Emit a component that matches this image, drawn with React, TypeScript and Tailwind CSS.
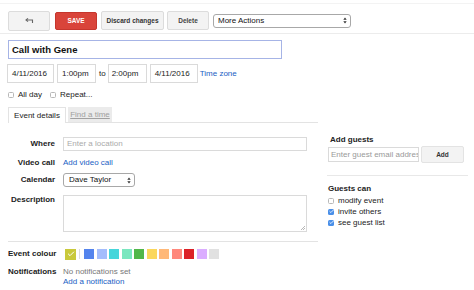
import { Check } from 'lucide-react';

const COLOURS = ['#5484ed', '#a4bdfc', '#46d6db', '#7ae7bf', '#51b749', '#fbd75b', '#ffb878', '#ff887c', '#dc2127', '#dbadff', '#e1e1e1'];

function Box({ checked, label }: { checked?: boolean; label: string }) {
  return (
    <div className="flex items-center gap-[4px] h-[11px] whitespace-nowrap">
      {checked ? (
        <span className="w-[6px] h-[6px] rounded-[1.5px] bg-[#4a8fe8] flex items-center justify-center">
          <Check className="w-[5px] h-[5px] text-white" strokeWidth={4} />
        </span>
      ) : (
        <span className="w-[6px] h-[6px] rounded-[1.5px] border border-[#b8b8b8] bg-white" />
      )}
      <span>{label}</span>
    </div>
  );
}

function Label({ children }: { children: string }) {
  return <div className="w-[47px] shrink-0 text-right font-bold text-[#222] whitespace-nowrap">{children}</div>;
}

function Arrows() {
  return (
    <svg width="4" height="7" viewBox="0 0 4 7" fill="#333">
      <path d="M0.3 2.8 2 0.5 3.7 2.8z" />
      <path d="M0.3 4.2 2 6.5 3.7 4.2z" />
    </svg>
  );
}

export default function App() {
  return (
    <div className="w-[474px] h-[290px] bg-white overflow-hidden text-[8px] leading-[10px] text-[#222] font-['Liberation_Sans',Arial,sans-serif]">
      {/* Toolbar */}
      <div className="h-[4px] border-b border-[#f3f3f3]" />
      <div className="h-[30px] border-b border-[#ececec] flex items-center pl-[8px] pt-[4px]">
        <button className="w-[42px] h-[20px] bg-[#f3f3f3] border border-[#dcdcdc] rounded-[2px] flex items-center justify-center">
          <svg width="9" height="5" viewBox="0 0 9 5" fill="none" stroke="#666" strokeWidth="1.1">
            <path d="M1 2h6.5v3" />
            <path d="M3 0.4 1 2l2 1.6" />
          </svg>
        </button>
        <button className="ml-[5px] w-[42px] h-[18px] bg-[#d9443a] border border-[#c5362d] rounded-[2px] text-white text-[6.5px] font-bold">SAVE</button>
        <button className="ml-[4px] w-[63px] h-[19px] bg-[#f3f3f3] border border-[#dcdcdc] rounded-[2px] text-[#333] text-[6.5px] font-bold whitespace-nowrap">Discard changes</button>
        <button className="ml-[3px] w-[42px] h-[19px] bg-[#f3f3f3] border border-[#dcdcdc] rounded-[2px] text-[#444] text-[6.5px] font-bold">Delete</button>
        <div className="ml-[4px] w-[138px] h-[14px] border border-[#a8a8a8] rounded-[3px] bg-white flex items-center justify-between pl-[4px] pr-[3px] text-[#111]">
          <span>More Actions</span>
          <Arrows />
        </div>
      </div>

      {/* Title */}
      <div className="mt-[6px] ml-[8px] w-[274px] h-[19px] border border-[#a6b4e6] px-[3px] flex items-center text-[9.5px] font-bold text-[#111]">
        Call with Gene
      </div>

      {/* Date row */}
      <div className="mt-[5px] ml-[7px] h-[19px] flex items-center whitespace-nowrap">
        <div className="w-[47px] h-[19px] border border-[#dadada] flex items-center pl-[4px]">4/11/2016</div>
        <div className="ml-[3px] w-[39px] h-[19px] border border-[#dadada] flex items-center pl-[4px]">1:00pm</div>
        <span className="ml-[3px]">to</span>
        <div className="ml-[2px] w-[39px] h-[19px] border border-[#dadada] flex items-center pl-[3px]">2:00pm</div>
        <div className="ml-[3px] w-[48px] h-[19px] border border-[#dadada] flex items-center pl-[4px]">4/11/2016</div>
        <a className="ml-[2px] text-[#2160c4]">Time zone</a>
      </div>

      {/* Checkbox row */}
      <div className="mt-[6px] ml-[8px] flex items-center gap-[8px] h-[11px]">
        <Box label="All day" />
        <Box label="Repeat..." />
      </div>

      <div className="flex">
        {/* Left column */}
        <div className="ml-[8px] w-[310px]">
          <div className="mt-[8px] flex items-end h-[15px] border-b border-[#e3e3e3]">
            <div className="w-[58px] h-[16px] border border-b-0 border-[#e3e3e3] bg-white flex items-center justify-center -mb-px">Event details</div>
            <div className="ml-[2px] w-[44px] h-[15px] bg-[#ebebeb] flex items-center justify-center text-[#a0a0a0] underline">Find a time</div>
          </div>

          <div className="mt-[14px] flex items-center gap-[8px]">
            <Label>Where</Label>
            <div className="w-[244px] h-[14px] border border-[#dadada] flex items-center pl-[3px] text-[#aaa]">Enter a location</div>
          </div>

          <div className="mt-[6px] flex items-center gap-[8px] h-[12px]">
            <Label>Video call</Label>
            <a className="text-[#2160c4]">Add video call</a>
          </div>

          <div className="mt-[4px] flex items-center gap-[8px]">
            <Label>Calendar</Label>
            <div className="w-[72px] h-[14px] border border-[#a8a8a8] rounded-[3px] flex items-center justify-between pl-[5px] pr-[3px] text-[#111]">
              <span>Dave Taylor</span>
              <Arrows />
            </div>
          </div>

          <div className="mt-[8px] flex items-start gap-[8px]">
            <Label>Description</Label>
            <div className="relative w-[244px] h-[37px] border border-[#dadada]">
              <svg className="absolute right-[1px] bottom-[1px]" width="4" height="4" viewBox="0 0 4 4" stroke="#999" strokeWidth="0.7">
                <path d="M0 4 4 0M2 4 4 2" />
              </svg>
            </div>
          </div>

          <div className="mt-[9px] border-t border-[#e3e3e3]" />

          <div className="mt-[6px] flex items-center gap-[10px] h-[12px]">
            <Label>Event colour</Label>
            <div className="flex items-center">
              <span className="w-[11px] h-[11px] bg-[#c9c93b] flex items-center justify-center">
                <Check className="w-[8px] h-[8px] text-white" strokeWidth={3} />
              </span>
              <span className="ml-[3px] w-px h-[10px] bg-[#ddd]" />
              <div className="ml-[4px] flex gap-[2.5px]">
                {COLOURS.map((c) => (
                  <span key={c} className="w-[10px] h-[10px]" style={{ backgroundColor: c }} />
                ))}
              </div>
            </div>
          </div>

          <div className="mt-[7px] flex items-start gap-[8px]">
            <Label>Notifications</Label>
            <div className="flex flex-col leading-[10px]">
              <span className="text-[#777]">No notifications set</span>
              <a className="text-[#2160c4]">Add a notification</a>
            </div>
          </div>
        </div>

        {/* Right column */}
        <div className="ml-[9px] w-[141px] pt-[35px]">
          <div className="ml-[3px] font-bold text-[#222]">Add guests</div>
          <div className="mt-[1px] flex items-center">
            <div className="ml-[1px] w-[91px] h-[15px] border border-[#dadada] flex items-center pl-[2px] text-[#999] whitespace-nowrap overflow-hidden">Enter guest email addres</div>
            <button className="ml-[2px] w-[43px] h-[17px] bg-[#f3f3f3] border border-[#e3e3e3] rounded-[2px] text-[6.5px] font-bold text-[#333]">Add</button>
          </div>
          <div className="mt-[12px] border-t border-[#e8e8e8]" />
          <div className="mt-[7px] ml-[1px] font-bold text-[#222] leading-[12px]">Guests can</div>
          <div className="ml-[1px] flex flex-col">
            <Box label="modify event" />
            <Box checked label="invite others" />
            <Box checked label="see guest list" />
          </div>
        </div>
      </div>
    </div>
  );
}
